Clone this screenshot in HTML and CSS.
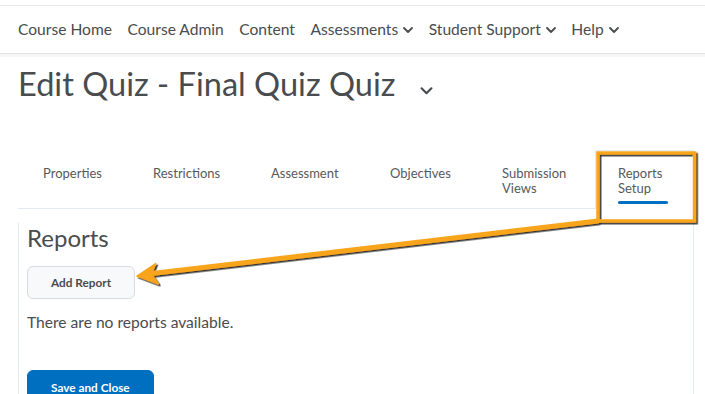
FILE: index.html
```html
<!DOCTYPE html>
<html lang="en">
<head>
<meta charset="utf-8">
<title>Edit Quiz - Final Quiz Quiz</title>
<link rel="stylesheet" href="styles.css">
</head>
<body>
<div class="page">
  <header class="nav">
    <a class="nav-item">Course Home</a>
    <a class="nav-item">Course Admin</a>
    <a class="nav-item">Content</a>
    <a class="nav-item">Assessments<svg class="nav-chev" viewBox="0 0 10 6"><path d="M1 1l4 4 4-4"/></svg></a>
    <a class="nav-item">Student Support<svg class="nav-chev" viewBox="0 0 10 6"><path d="M1 1l4 4 4-4"/></svg></a>
    <a class="nav-item">Help<svg class="nav-chev" viewBox="0 0 10 6"><path d="M1 1l4 4 4-4"/></svg></a>
  </header>

  <main class="content">
    <h1 class="title">Edit Quiz - Final Quiz Quiz<svg class="title-chev" viewBox="0 0 14 9"><path d="M1.5 1.5l5.5 5.5 5.5-5.5"/></svg></h1>

    <div class="tabs">
      <div class="tab">Properties</div>
      <div class="tab">Restrictions</div>
      <div class="tab">Assessment</div>
      <div class="tab">Objectives</div>
      <div class="tab">Submission<br>Views</div>
      <div class="tab active">Reports<br>Setup<div class="tab-bar"></div></div>
    </div>

    <section class="panel">
      <h2 class="panel-title">Reports</h2>
      <button class="btn">Add Report</button>
      <p class="empty">There are no reports available.</p>
      <button class="btn primary">Save and Close</button>
    </section>
  </main>

  <svg class="annot" width="705" height="394" viewBox="0 0 705 394">
    <defs>
      <filter id="sh" x="-5%" y="-5%" width="110%" height="120%">
        <feDropShadow dx="1.6" dy="1.6" stdDeviation="0.7" flood-color="#1e1e1e" flood-opacity="0.9"/>
      </filter>
    </defs>
    <g filter="url(#sh)">
      <rect x="598" y="153" width="96.5" height="68" fill="none" stroke="#f8a51c" stroke-width="3.5"/>
      <path d="M598 221 L152 273.5" stroke="#f8a51c" stroke-width="5" stroke-linecap="round" fill="none"/>
      <path d="M137 276 L155.7 263.5 L151.5 274 L158.3 284 Z" fill="#f8a51c" stroke="#f8a51c" stroke-width="1.5" stroke-linejoin="round"/>
    </g>
  </svg>
</div>
</body>
</html>
```

FILE: styles.css
```css
* { box-sizing: border-box; }

body {
  margin: 0;
  background: #ffffff;
  font-family: Lato, "Open Sans", "Liberation Sans", sans-serif;
  color: #494c4e;
}

.page {
  position: relative;
  width: 705px;
  height: 394px;
  overflow: hidden;
}

/* top navigation */
.nav {
  margin-top: 5px;
  height: 49px;
  border-top: 1px solid #e8e8e8;
  border-bottom: 1px solid #e3e3e3;
  box-shadow: 0 3px 0 #f6f6f6;
  display: flex;
  align-items: center;
  gap: 15.5px;
  padding-left: 18px;
}

.nav-item {
  font-size: 15.6px;
  color: #494c4e;
  display: flex;
  align-items: center;
  padding-bottom: 1px;
}

.nav-chev {
  width: 10px;
  height: 6px;
  margin-left: 5px;
  margin-top: 2px;
  fill: none;
  stroke: #494c4e;
  stroke-width: 1.8;
  stroke-linecap: round;
  stroke-linejoin: round;
}

/* content */
.content {
  padding: 0 11px 0 18px;
}

.title {
  margin: 10px 0 0;
  font-size: 32.6px;
  line-height: 40px;
  font-weight: 400;
  color: #494c4e;
  white-space: nowrap;
}

.title-chev {
  width: 13px;
  height: 8px;
  margin-left: 24px;
  vertical-align: 1px;
  fill: none;
  stroke: #494c4e;
  stroke-width: 2.4;
  stroke-linecap: round;
  stroke-linejoin: round;
}

/* tabs */
.tabs {
  margin-top: 46px;
  display: grid;
  grid-template-columns: 110px 118px 119px 112px 118px 1fr;
  height: 59px;
}

.tab {
  padding: 16px 0 0 25px;
  font-size: 13px;
  line-height: 15px;
  color: #565a5c;
  border-bottom: 1px solid #e3e9f1;
  white-space: nowrap;
}

.tab.active {
  padding: 15px 0 0 22px;
  border: 1px solid #e3e9f1;
  border-bottom: none;
  background: #ffffff;
}

.tab-bar {
  width: 50px;
  height: 3px;
  margin-top: 5px;
  border-radius: 2px;
  background: #006fbf;
}

/* panel */
.panel {
  border: 1px solid #e3e9f1;
  border-top: none;
  padding: 0 8px;
  min-height: 260px;
}

.panel-title {
  margin: 14px 0 0;
  font-size: 24px;
  line-height: 30px;
  font-weight: 400;
  color: #494c4e;
}

.btn {
  display: block;
  margin-top: 13px;
  height: 33px;
  padding: 0 23px;
  border: 1px solid #d6dce4;
  border-radius: 6px;
  background: #f8f9fb;
  font-family: Lato, "Open Sans", "Liberation Sans", sans-serif;
  font-size: 11.8px;
  font-weight: 700;
  color: #494c4e;
}

.btn.primary {
  margin-top: 36px;
  height: 34px;
  padding: 0 23px;
  border-color: #006fbf;
  background: #006fbf;
  color: #ffffff;
}

.empty {
  margin: 11px 0 0;
  font-size: 15.6px;
  line-height: 24px;
  color: #494c4e;
}

/* annotation overlay */
.annot {
  position: absolute;
  left: 0;
  top: 0;
  pointer-events: none;
}
```
